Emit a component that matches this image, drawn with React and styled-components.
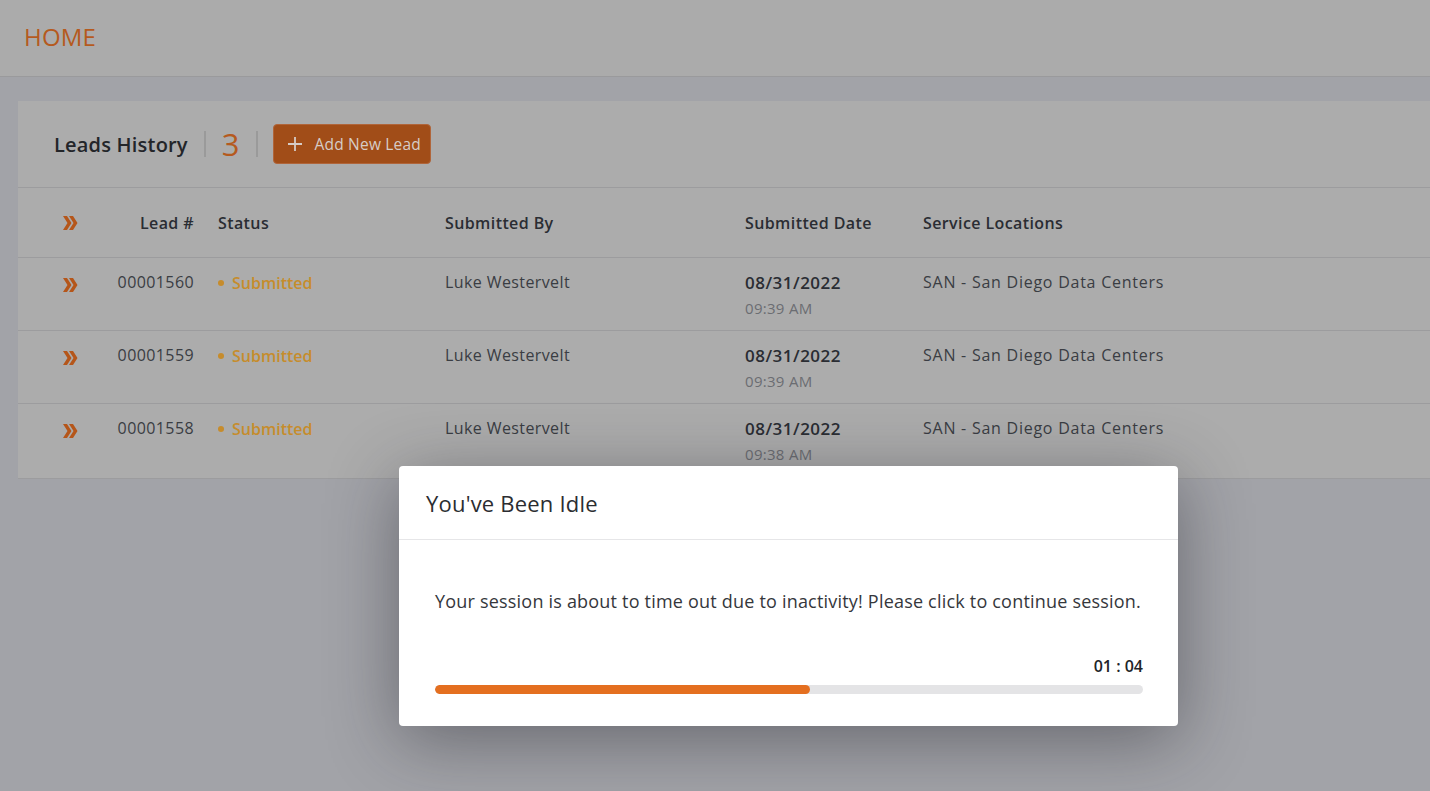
import React from 'react'
import styled, { createGlobalStyle } from 'styled-components'

const GlobalStyle = createGlobalStyle`
  html, body {
    margin: 0;
    padding: 0;
    background: #a2a3a8;
    font-family: 'Open Sans', 'Liberation Sans', sans-serif;
    overflow: hidden;
  }
`

const Page = styled.div`
  position: relative;
  width: 1430px;
  height: 791px;
  background: #a2a3a8;
`

const TopBar = styled.header`
  height: 77px;
  display: flex;
  align-items: center;
  padding-left: 24px;
  padding-bottom: 3px;
  box-sizing: border-box;
  background: #ababab;
  border-bottom: 1px solid #9a9a9c;
`

const PageTitle = styled.h1`
  margin: 0;
  font-size: 24px;
  font-weight: 500;
  color: #b55a1e;
  letter-spacing: 0.2px;
`

const Main = styled.main`
  padding: 24px 0 0 18px;
`

const Card = styled.section`
  background: #acacac;
  border-bottom: 1px solid #9c9c9e;
`

const CardHeader = styled.div`
  height: 86px;
  display: flex;
  align-items: center;
  padding-left: 36px;
  border-bottom: 1px solid #9c9c9e;
`

const CardTitle = styled.h2`
  margin: 0;
  font-size: 20px;
  font-weight: 600;
  letter-spacing: 0.2px;
  color: #232529;
`

const Divider = styled.span`
  width: 2px;
  height: 26px;
  background: #9a9a9a;
  margin: 0 ${p => p.$after || 16}px 0 16px;
`

const Count = styled.span`
  font-size: 31px;
  font-weight: 400;
  color: #b55a1e;
  line-height: 1;
`

const AddButton = styled.button`
  display: flex;
  align-items: center;
  gap: 12px;
  height: 40px;
  padding: 0 9px 0 13px;
  border: 1px solid #b0653a;
  border-radius: 4px;
  background: #a14d18;
  color: #d6ccc6;
  font-family: inherit;
  font-size: 15.5px;
  font-weight: 500;
  letter-spacing: 0.2px;
`

const Row = styled.div`
  display: grid;
  grid-template-columns: 82px 106px 227px 300px 178px 1fr;
  align-items: ${p => (p.$head ? 'center' : 'start')};
  height: ${p => p.$height}px;
  padding-top: ${p => (p.$head ? 0 : 12)}px;
  box-sizing: border-box;
  border-bottom: ${p => (p.$last ? 'none' : '1px solid #9c9c9e')};
`

const Cell = styled.div`
  padding: 0 12px;
  font-size: 16px;
  font-weight: ${p => (p.$head ? 600 : 400)};
  letter-spacing: ${p => p.$spacing ?? 0.4}px;
  line-height: 24px;
  color: ${p => (p.$head ? '#2a2d33' : '#3a3d43')};
  text-align: ${p => (p.$right ? 'right' : 'left')};
  white-space: nowrap;
`

const IconCell = styled.div`
  padding-left: 44px;
  padding-top: ${p => (p.$head ? 0 : 8)}px;
  display: flex;
  color: #b5561a;
`

const Status = styled.span`
  display: flex;
  align-items: center;
  height: 24px;
  padding-top: 1px;
  gap: 8px;
  font-weight: 600;
  letter-spacing: 0;
  color: #c68c2c;
  &::before {
    content: '';
    width: 6px;
    height: 6px;
    border-radius: 50%;
    background: #c68c2c;
  }
`

const DateMain = styled.div`
  font-size: 17px;
  font-weight: 600;
  letter-spacing: 0.5px;
  line-height: 26px;
  color: #2a2d33;
`

const DateTime = styled.div`
  margin-top: 2px;
  font-size: 15px;
  letter-spacing: 0.3px;
  line-height: 20px;
  color: #6b6d72;
`

const Modal = styled.div`
  position: absolute;
  left: 399px;
  top: 466px;
  width: 779px;
  height: 260px;
  background: #fff;
  border-radius: 4px;
  box-shadow: 0 14px 70px rgba(30, 32, 40, 0.45);
`

const ModalHeader = styled.div`
  height: 73px;
  display: flex;
  align-items: center;
  padding-left: 27px;
  border-bottom: 1px solid #e6e6e8;
  font-size: 22px;
  letter-spacing: 0.2px;
  color: #2b2d31;
`

const ModalBody = styled.div`
  padding: 49px 35px 32px 36px;
`

const Message = styled.p`
  margin: 0;
  font-size: 18px;
  letter-spacing: 0.2px;
  line-height: 24px;
  white-space: nowrap;
  color: #35373c;
`

const Timer = styled.div`
  margin-top: 42px;
  text-align: right;
  font-size: 16px;
  font-weight: 600;
  line-height: 22px;
  color: #222428;
`

const Track = styled.div`
  margin-top: 8px;
  height: 9px;
  border-radius: 5px;
  background: #e4e4e6;
  overflow: hidden;
`

const Fill = styled.div`
  height: 100%;
  border-radius: 5px;
  background: #e46f20;
`

const Chevrons = () => (
  <svg width="16" height="14" viewBox="0 0 16 14">
    <polygon points="1,0 5,0 9.5,7 5,14 1,14 5.5,7" fill="currentColor" />
    <polygon points="7,0 11,0 15.5,7 11,14 7,14 11.5,7" fill="currentColor" />
  </svg>
)

const leads = [
  { id: '00001560', time: '09:39 AM', height: 73 },
  { id: '00001559', time: '09:39 AM', height: 73 },
  { id: '00001558', time: '09:38 AM', height: 74 },
]

const App = () => {
  const progress = 53

  return (
    <Page>
      <GlobalStyle />
      <TopBar>
        <PageTitle>HOME</PageTitle>
      </TopBar>
      <Main>
        <Card>
          <CardHeader>
            <CardTitle>Leads History</CardTitle>
            <Divider />
            <Count>3</Count>
            <Divider $after={15} />
            <AddButton>
              <svg width="16" height="16" viewBox="0 0 16 16">
                <path d="M8 1v14M1 8h14" stroke="currentColor" strokeWidth="1.8" />
              </svg>
              Add New Lead
            </AddButton>
          </CardHeader>
          <Row $head $height={70}>
            <IconCell $head>
              <Chevrons />
            </IconCell>
            <Cell $head $right>Lead #</Cell>
            <Cell $head>Status</Cell>
            <Cell $head>Submitted By</Cell>
            <Cell $head>Submitted Date</Cell>
            <Cell $head>Service Locations</Cell>
          </Row>
          {leads.map((lead, i) => (
            <Row key={lead.id} $height={lead.height} $last={i === leads.length - 1}>
              <IconCell>
                <Chevrons />
              </IconCell>
              <Cell $right>{lead.id}</Cell>
              <Cell>
                <Status>Submitted</Status>
              </Cell>
              <Cell>Luke Westervelt</Cell>
              <Cell>
                <DateMain>08/31/2022</DateMain>
                <DateTime>{lead.time}</DateTime>
              </Cell>
              <Cell $spacing={0.75}>SAN - San Diego Data Centers</Cell>
            </Row>
          ))}
        </Card>
      </Main>
      <Modal>
        <ModalHeader>You've Been Idle</ModalHeader>
        <ModalBody>
          <Message>
            Your session is about to time out due to inactivity! Please click to continue session.
          </Message>
          <Timer>01 : 04</Timer>
          <Track>
            <Fill style={{ width: `${progress}%` }} />
          </Track>
        </ModalBody>
      </Modal>
    </Page>
  )
}

export default App
